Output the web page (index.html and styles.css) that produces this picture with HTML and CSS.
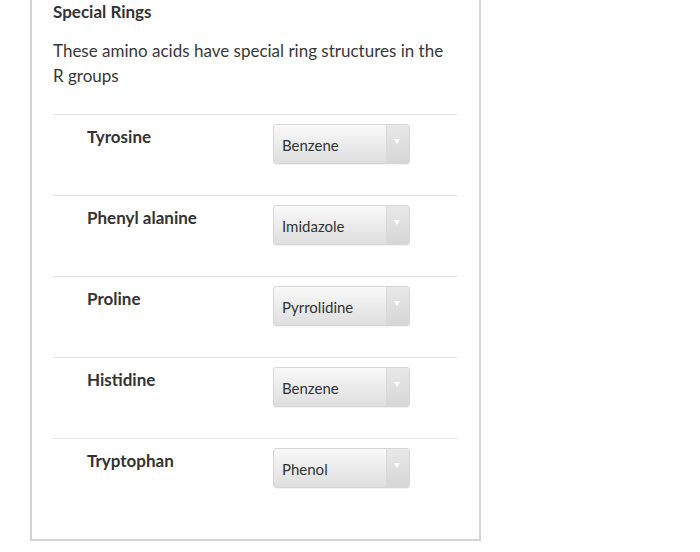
FILE: index.html
```html
<!DOCTYPE html>
<html>
<head>
<meta charset="utf-8">
<link rel="stylesheet" href="styles.css">
</head>
<body>
<div class="card">
  <h2 class="title">Special Rings</h2>
  <p class="desc">These amino acids have special ring structures in the R groups</p>
  <div class="rows">
    <div class="row">
      <div class="label">Tyrosine</div>
      <div class="select"><span class="value">Benzene</span><span class="arrow"></span></div>
    </div>
    <div class="row">
      <div class="label">Phenyl alanine</div>
      <div class="select"><span class="value">Imidazole</span><span class="arrow"></span></div>
    </div>
    <div class="row">
      <div class="label">Proline</div>
      <div class="select"><span class="value">Pyrrolidine</span><span class="arrow"></span></div>
    </div>
    <div class="row">
      <div class="label">Histidine</div>
      <div class="select"><span class="value">Benzene</span><span class="arrow"></span></div>
    </div>
    <div class="row">
      <div class="label">Tryptophan</div>
      <div class="select"><span class="value">Phenol</span><span class="arrow"></span></div>
    </div>
  </div>
</div>
</body>
</html>
```

FILE: styles.css
```css
html, body {
  margin: 0;
  padding: 0;
  background: #ffffff;
}

body {
  font-family: Lato, "Open Sans", sans-serif;
  color: #333333;
}

.card {
  box-sizing: border-box;
  margin-left: 30px;
  width: 451px;
  border: 2px solid #d4d4d4;
  border-top: none;
  padding: 0 22px 20px 21px;
}

.title {
  margin: 0;
  font-size: 17px;
  line-height: 24px;
  font-weight: 700;
  color: #333333;
}

.desc {
  margin: 14px 0 0 0;
  font-size: 17px;
  line-height: 25px;
  width: 400px;
  color: #383838;
}

.rows {
  margin-top: 26px;
}

.row {
  display: flex;
  align-items: flex-start;
  border-top: 1px solid #e3e3e3;
  padding: 9px 0 31px 34px;
}

.row:last-child {
  padding-bottom: 31px;
}

.label {
  width: 186px;
  margin-top: 1px;
  font-size: 17px;
  line-height: 24px;
  font-weight: 700;
  color: #333333;
}

.select {
  box-sizing: border-box;
  width: 137px;
  height: 40px;
  display: flex;
  border: 1px solid #d6d6d6;
  border-radius: 3px;
  background: linear-gradient(#f9f9f9, #dedede);
  box-shadow: 0 1px 1px rgba(0, 0, 0, 0.06);
}

.value {
  flex: 1;
  padding: 2px 0 0 8px;
  font-size: 15px;
  line-height: 36px;
  color: #333333;
}

.arrow {
  position: relative;
  width: 22px;
  border-left: 1px solid #d9d9d9;
  background: linear-gradient(#e8e8e8, #d6d6d6);
  border-radius: 0 2px 2px 0;
}

.arrow::after {
  content: "";
  position: absolute;
  left: 7px;
  top: 14px;
  border-left: 3.5px solid transparent;
  border-right: 3.5px solid transparent;
  border-top: 5px solid #ffffff;
}
```
